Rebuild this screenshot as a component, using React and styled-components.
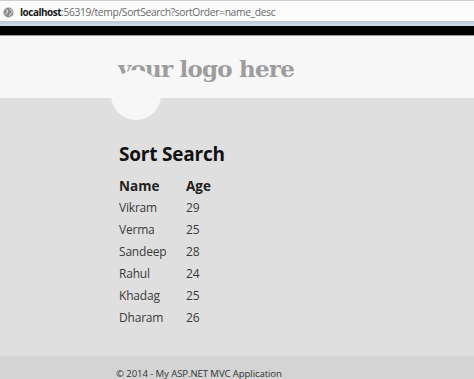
import React from "react";
import styled, { createGlobalStyle } from "styled-components";

const GlobalStyle = createGlobalStyle`
  html, body {
    margin: 0;
    padding: 0;
    background: #dfdfdf;
    font-family: "Open Sans", "Noto Sans", sans-serif;
  }
`;

const Page = styled.div`
  width: 474px;
  height: 379px;
  overflow: hidden;
  display: flex;
  flex-direction: column;
  background: #dfdfdf;
`;

const AddressBar = styled.div`
  height: 21px;
  display: flex;
  align-items: center;
  gap: 6px;
  padding: 2px 0 0 3px;
  background: #fbfbfb;
  border-top: 1px solid #c9ced6;
  box-sizing: border-box;
  font-size: 10.3px;
  color: #6a6a6a;
  letter-spacing: -0.35px;
`;

const Host = styled.span`
  color: #1a1a1a;
  font-weight: 700;
  font-size: 10px;
  letter-spacing: -0.5px;
`;

const Band = styled.div`
  height: 5px;
  background: linear-gradient(#b8c8dc, #d0dbe8);
`;

const BlackBar = styled.div`
  height: 9px;
  background: #000;
  border-bottom: 1px solid #9a9a9a;
`;

const Header = styled.header`
  height: 62px;
  background: #f7f7f7;
  padding-left: 118px;
  display: flex;
  align-items: center;
`;

const Logo = styled.div`
  font-family: "DejaVu Serif", "Liberation Serif", serif;
  font-weight: 600;
  font-size: 23px;
  color: #9d9d9d;
  letter-spacing: -0.8px;
  margin-top: 3px;
`;

const Body = styled.main`
  position: relative;
  flex: 1;
  padding: 43px 0 0 119px;
`;

const Bump = styled.div`
  position: absolute;
  left: 111px;
  top: -28px;
  width: 50px;
  height: 50px;
  border-radius: 50%;
  background: #f7f7f7;
`;

const Title = styled.h2`
  margin: 0 0 9px;
  font-size: 19px;
  font-weight: 700;
  color: #111;
  line-height: 26px;
  letter-spacing: -0.2px;
`;

const Table = styled.div`
  display: grid;
  grid-template-columns: 67px auto;
  grid-template-rows: 20px;
  grid-auto-rows: 22px;
  align-items: center;
`;

const Cell = styled.div`
  font-size: ${(p) => (p.$head ? "13.5px" : "12px")};
  font-weight: ${(p) => (p.$head ? 700 : 400)};
  color: ${(p) => (p.$head ? "#222" : "#3a3a3a")};
  letter-spacing: ${(p) => (p.$head ? "0" : "-0.2px")};
`;

const Footer = styled.footer`
  height: 23px;
  background: #d4d4d4;
  padding: 0 0 0 116px;
  box-sizing: border-box;
  display: flex;
  align-items: flex-end;
  font-size: 9.6px;
  line-height: 11px;
  color: #333;
  letter-spacing: -0.1px;
`;

const Globe = () => (
  <svg width="11" height="11" viewBox="0 0 12 12">
    <circle cx="6" cy="6" r="5.5" fill="#8a8a8a" />
    <path d="M3 3.5c1.5-.5 2.5.5 2 2s-2 1-2.5 2.5M7 2c1 1 2.5 1 3 2.5S9 7 8 8s-1 2 0 2.5" stroke="#d8d8d8" strokeWidth="1.2" fill="none" />
  </svg>
);

const people = [
  ["Vikram", 29],
  ["Verma", 25],
  ["Sandeep", 28],
  ["Rahul", 24],
  ["Khadag", 25],
  ["Dharam", 26],
];

export default function App() {
  return (
    <Page>
      <GlobalStyle />
      <AddressBar>
        <Globe />
        <span>
          <Host>localhost</Host>:56319/temp/SortSearch?sortOrder=name_desc
        </span>
      </AddressBar>
      <Band />
      <BlackBar />
      <Header>
        <Logo>your logo here</Logo>
      </Header>
      <Body>
        <Bump />
        <Title>Sort Search</Title>
        <Table>
          <Cell $head>Name</Cell>
          <Cell $head>Age</Cell>
          {people.map(([name, age]) => (
            <React.Fragment key={name}>
              <Cell>{name}</Cell>
              <Cell>{age}</Cell>
            </React.Fragment>
          ))}
        </Table>
      </Body>
      <Footer>© 2014 - My ASP.NET MVC Application</Footer>
    </Page>
  );
}
